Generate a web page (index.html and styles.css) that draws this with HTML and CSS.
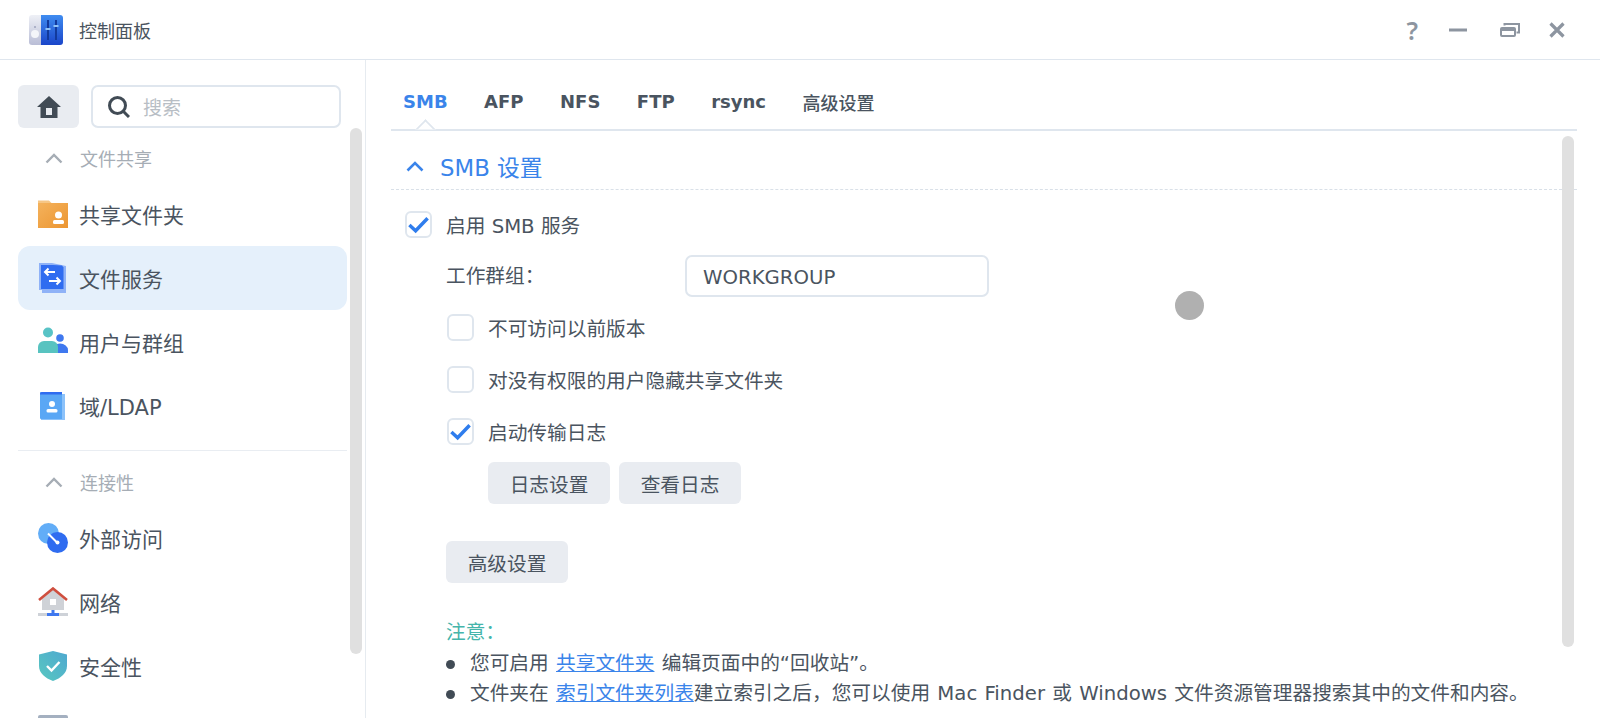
FILE: index.html
```html
<!DOCTYPE html>
<html lang="zh-CN">
  <head>
    <meta charset="UTF-8" />
    <title>控制面板</title>
    <link rel="stylesheet" href="styles.css">
  </head>
  <body>
    <div class="window">
      <header class="titlebar">
        <svg class="app-icon" viewBox="0 0 34 30" width="34" height="30">
          <defs>
            <linearGradient id="appLeft" x1="0" y1="0" x2="0" y2="1">
              <stop offset="0" stop-color="#eef0f6" />
              <stop offset="1" stop-color="#b9bdd6" />
            </linearGradient>
            <linearGradient id="appRight" x1="0" y1="0" x2="0" y2="1">
              <stop offset="0" stop-color="#3f8cf0" />
              <stop offset="1" stop-color="#1a45c9" />
            </linearGradient>
          </defs>
          <path d="M3 0h10v30H3a3 3 0 0 1-3-3V3a3 3 0 0 1 3-3z" fill="url(#appLeft)" />
          <path d="M12 0h19a3 3 0 0 1 3 3v24a3 3 0 0 1-3 3H12z" fill="url(#appRight)" />
          <circle cx="6" cy="19" r="4" fill="#f4f5f9" />
          <circle cx="6" cy="12" r="1" fill="#9ea3bd" />
          <path d="M19 5v20M27 5v20" stroke="#123a9c" stroke-width="2" />
          <path d="M16.5 14h5M24.5 11h5" stroke="#8fc2f7" stroke-width="2" />
        </svg>
        <span class="app-title">控制面板</span>
        <div class="win-controls">
          <span class="win-help">?</span>
          <svg viewBox="0 0 18 18" width="18" height="18"><path d="M0 9h18" stroke="#8d95a0" stroke-width="3" /></svg>
          <svg class="win-restore" viewBox="0 0 20 14" width="20" height="14"><path d="M4.5 2.500V1H19v8.500h-2.500" fill="none" stroke="#8d95a0" stroke-width="2" /><rect x="1" y="5" width="14" height="8" rx="1" fill="none" stroke="#8d95a0" stroke-width="2" /><path d="M1 6.500h14" stroke="#8d95a0" stroke-width="3" /></svg>
          <svg viewBox="0 0 16 16" width="16" height="16"><path d="M1.500 1.500l13 13M14.500 1.500l-13 13" stroke="#8d95a0" stroke-width="3.2" /></svg>
        </div>
      </header>

      <div class="body-row">
        <aside class="sidebar">
          <div class="search-row">
            <button class="home-btn">
              <svg viewBox="0 0 24 22" width="24" height="22"><path d="M12 0L0 11h3.500v11h17V11H24z" fill="#414b55" /><rect x="9" y="12" width="6" height="7" fill="#e9ecf1" /></svg>
            </button>
            <div class="search-box">
              <svg viewBox="0 0 22 22" width="22" height="22"><circle cx="9.500" cy="9.500" r="8" fill="none" stroke="#414b55" stroke-width="3" /><path d="M15 15l6 6" stroke="#414b55" stroke-width="3" /></svg>
              <span class="search-text">搜索</span>
            </div>
          </div>

          <div class="nav-label">
            <svg viewBox="0 0 18 11" width="18" height="11"><path d="M1.500 9.500L9 2l7.500 7.500" fill="none" stroke="#a6adb5" stroke-width="2.4" /></svg>
            <span>文件共享</span>
          </div>
          <div class="nav-item">
            <svg class="nav-icon" viewBox="0 0 30 30" width="30" height="30">
              <defs>
                <linearGradient id="folderFill" x1="0" y1="0" x2="1" y2="1">
                  <stop offset="0" stop-color="#f4b25c" />
                  <stop offset="1" stop-color="#ec9632" />
                </linearGradient>
              </defs>
              <path d="M0 1.500h11l3 3h-14z" fill="#f6c685" />
              <rect x="0" y="4" width="30" height="25" fill="url(#folderFill)" />
              <circle cx="20.500" cy="16" r="3.500" fill="#fff" />
              <rect x="15" y="21" width="11" height="4" rx="1.500" fill="#fff" />
            </svg>
            <span>共享文件夹</span>
          </div>
          <div class="nav-item active">
            <svg class="nav-icon" viewBox="0 0 30 30" width="30" height="30">
              <path d="M1 0h13l14 3v27H4V27H1z" fill="#8fb2f7" />
              <path d="M3 2h12l9 .5 1.500 2V26H3z" fill="#2f6cf0" />
              <path d="M17 9H7M10.500 5.500L7 9l3.500 3.500M11 18h11M18.500 14.500L22 18l-3.500 3.500" fill="none" stroke="#fff" stroke-width="2" />
            </svg>
            <span>文件服务</span>
          </div>
          <div class="nav-item">
            <svg class="nav-icon" viewBox="0 0 30 30" width="30" height="30">
              <circle cx="22" cy="11" r="3.800" fill="#3f78ef" />
              <path d="M14 26v-3a8 6.500 0 0 1 8-6.500 8 6.500 0 0 1 8 6.500v3z" fill="#3f78ef" />
              <circle cx="10" cy="5.500" r="5" fill="#58c3c6" />
              <path d="M0 26v-6a6 6 0 0 1 6-6h8a6 6 0 0 1 6 6v6z" fill="#58c3c0" />
            </svg>
            <span>用户与群组</span>
          </div>
          <div class="nav-item">
            <svg class="nav-icon" viewBox="0 0 30 30" width="30" height="30">
              <path d="M3 3h24v26H3z" fill="#8cc2fa" />
              <path d="M2 2a1 1 0 0 1 1-1h21v27H3a1 1 0 0 1-1-1z" fill="#5aa7f5" />
              <path d="M2 3a2 2 0 0 1 2-2h20v2.500H2z" fill="#2f6cf0" />
              <circle cx="14" cy="13" r="3" fill="#fff" />
              <rect x="8.500" y="18" width="11" height="3.500" rx="1.500" fill="#fff" />
            </svg>
            <span>域/LDAP</span>
          </div>

          <div class="nav-divider"></div>

          <div class="nav-label">
            <svg viewBox="0 0 18 11" width="18" height="11"><path d="M1.500 9.500L9 2l7.500 7.500" fill="none" stroke="#a6adb5" stroke-width="2.4" /></svg>
            <span>连接性</span>
          </div>
          <div class="nav-item">
            <svg class="nav-icon" viewBox="0 0 30 30" width="30" height="30">
              <circle cx="10.500" cy="10.500" r="10.500" fill="#62adf7" />
              <circle cx="19.500" cy="19.500" r="10.500" fill="#2f6cf0" />
              <path d="M10 10.500l9 9" stroke="#fff" stroke-width="2" />
              <circle cx="19.500" cy="19.500" r="2" fill="#fff" />
            </svg>
            <span>外部访问</span>
          </div>
          <div class="nav-item">
            <svg class="nav-icon" viewBox="0 0 30 30" width="30" height="30">
              <path d="M4 12L15 2l11 10v11H4z" fill="#cfd2d7" />
              <path d="M1 13L15 1.500 29 13" fill="none" stroke="#cf4f3f" stroke-width="2.6" />
              <rect x="12" y="12" width="6" height="6" fill="#fff" />
              <rect x="0" y="26" width="30" height="3" fill="#ced2d8" />
              <path d="M15 23v4" stroke="#3f78ef" stroke-width="3" />
              <rect x="9" y="26" width="12" height="3" fill="#3f78ef" />
            </svg>
            <span>网络</span>
          </div>
          <div class="nav-item">
            <svg class="nav-icon" viewBox="0 0 30 30" width="30" height="30">
              <defs>
                <linearGradient id="shieldFill" x1="0" y1="1" x2="1" y2="0">
                  <stop offset="0" stop-color="#58c8c0" />
                  <stop offset="1" stop-color="#4fa8d0" />
                </linearGradient>
              </defs>
              <path d="M15 0l14 3.500V15c0 7-6 12-14 15C7 27 1 22 1 15V3.500z" fill="url(#shieldFill)" />
              <path d="M9 15l4.500 4.500L21.500 11" fill="none" stroke="#fff" stroke-width="2.4" />
            </svg>
            <span>安全性</span>
          </div>
          <div class="nav-item">
            <svg class="nav-icon" viewBox="0 0 30 30" width="30" height="30"><rect x="0" y="0" width="30" height="28" rx="2" fill="#a4b0c0" /></svg>
          </div>
          <div class="sidebar-scroll"></div>
        </aside>

        <main class="content">
          <nav class="tabs">
            <a class="tab selected">SMB</a>
            <a class="tab">AFP</a>
            <a class="tab">NFS</a>
            <a class="tab">FTP</a>
            <a class="tab">rsync</a>
            <a class="tab plain">高级设置</a>
          </nav>

          <div class="section-head">
            <svg viewBox="0 0 18 11" width="18" height="11"><path d="M1.500 9.500L9 2l7.500 7.500" fill="none" stroke="#3a84ea" stroke-width="2.6" /></svg>
            <span>SMB 设置</span>
          </div>

          <div class="form">
            <label class="check-row first">
              <span class="check-box">
                <svg viewBox="0 0 24 20" width="24" height="20"><path d="M2.500 10l6.500 6L21.500 3" fill="none" stroke="#2f7ded" stroke-width="3.6" /></svg>
              </span>
              <span>启用 SMB 服务</span>
            </label>

            <div class="field-row">
              <span class="field-label">工作群组&#65306;</span>
              <div class="text-input">WORKGROUP</div>
            </div>

            <label class="check-row sub near"><span class="check-box"></span><span>不可访问以前版本</span></label>
            <label class="check-row sub"><span class="check-box"></span><span>对没有权限的用户隐藏共享文件夹</span></label>
            <label class="check-row sub">
              <span class="check-box">
                <svg viewBox="0 0 24 20" width="24" height="20"><path d="M2.500 10l6.500 6L21.500 3" fill="none" stroke="#2f7ded" stroke-width="3.6" /></svg>
              </span>
              <span>启动传输日志</span>
            </label>

            <div class="btn-row">
              <button class="btn">日志设置</button>
              <button class="btn">查看日志</button>
            </div>

            <button class="btn advanced">高级设置</button>

            <p class="note-title">注意&#65306;</p>
            <ul class="note-list">
              <li>您可启用 <a class="link">共享文件夹</a> 编辑页面中的“回收站”。</li>
              <li>文件夹在 <a class="link">索引文件夹列表</a>建立索引之后&#65292;您可以使用 Mac Finder 或 Windows 文件资源管理器搜索其中的文件和内容。</li>
            </ul>
          </div>
          <div class="content-scroll"></div>
        </main>
      </div>
      <div class="touch-dot"></div>
    </div>
  </body>
</html>
```

FILE: styles.css
```css
html, body {
  margin: 0;
  height: 100%;
  overflow: hidden;
  background: #fff;
}
body {
  color: #4a5460;
  font-family: "DejaVu Sans", "Noto Sans CJK SC", sans-serif;
  font-size: 19.7px;
}
.window {
  position: relative;
  display: flex;
  flex-direction: column;
  height: 718px;
  overflow: hidden;
}

/* Title bar */
.titlebar {
  flex: none;
  display: flex;
  align-items: center;
  height: 59px;
  padding: 0 35px 0 29px;
  border-bottom: 1px solid #dfe6ee;
  box-sizing: content-box;
}
.app-title {
  margin-left: 16px;
  font-size: 18px;
}
.win-controls {
  margin-left: auto;
  display: flex;
  align-items: center;
  gap: 31px;
}
.win-help {
  color: #8d95a0;
  font-family: "Noto Sans", sans-serif;
  font-size: 25px;
  font-weight: 600;
  line-height: 30px;
}
.win-restore {
  margin: 0 -2px 0 2px;
}

.body-row {
  flex: 1;
  display: flex;
  min-height: 0;
}

/* Sidebar */
.sidebar {
  position: relative;
  flex: none;
  width: 366px;
  padding: 25px 0 0 18px;
  box-sizing: border-box;
  border-right: 1px solid #e6ebf0;
  overflow: hidden;
}
.search-row {
  display: flex;
  gap: 12px;
  width: 323px;
}
.home-btn {
  flex: none;
  display: flex;
  align-items: center;
  justify-content: center;
  width: 61px;
  height: 43px;
  padding: 0;
  border: 0;
  border-radius: 6px;
  background: #e9ecf1;
}
.search-box {
  flex: 1;
  display: flex;
  align-items: center;
  gap: 13px;
  height: 43px;
  padding-left: 15px;
  box-sizing: border-box;
  border: 2px solid #dfe6ee;
  border-radius: 7px;
}
.search-text {
  color: #b8bec5;
  font-size: 19px;
}
.nav-label {
  display: flex;
  align-items: center;
  gap: 17px;
  height: 40px;
  margin: 10px 0 4px;
  padding-left: 27px;
  color: #a6adb5;
  font-size: 18px;
}
.nav-item {
  display: flex;
  align-items: center;
  gap: 11px;
  width: 329px;
  height: 64px;
  padding-left: 20px;
  box-sizing: border-box;
  border-radius: 12px;
  font-size: 21px;
}
.nav-item.active {
  background: #e5f0fb;
}
.nav-icon {
  flex: none;
}
.nav-divider {
  width: 329px;
  height: 1px;
  margin: 12px 0 11px;
  background: #e9edf2;
}
.sidebar-scroll {
  position: absolute;
  left: 350px;
  top: 68px;
  width: 12px;
  height: 526px;
  border-radius: 6px;
  background: #e0e0e0;
}

/* Main panel */
.content {
  position: relative;
  flex: 1;
  min-width: 0;
  padding: 0 23px 0 25px;
}
.tabs {
  position: relative;
  display: flex;
  align-items: center;
  gap: 36.5px;
  height: 55px;
  padding: 14px 0 0 12px;
  border-bottom: 2px solid #dfe6ee;
  font-size: 18px;
  font-weight: 700;
}
.tab.selected {
  color: #3a84ea;
}
.tab.plain {
  font-weight: 500;
}
.tabs::after {
  content: "";
  position: absolute;
  left: 27px;
  bottom: -8px;
  width: 13px;
  height: 13px;
  background: #fff;
  border-top: 2px solid #dfe6ee;
  border-left: 2px solid #dfe6ee;
  transform: rotate(45deg);
  clip-path: polygon(0 0, 100% 0, 0 100%);
}
.section-head {
  display: flex;
  align-items: center;
  gap: 16px;
  height: 46px;
  padding: 12px 0 0 15px;
  box-sizing: content-box;
  border-bottom: 1px dashed #d9e0e8;
  color: #3a84ea;
  font-size: 22.8px;
}
.form {
  padding-left: 14px;
}
.check-row {
  display: flex;
  align-items: center;
  gap: 14px;
  height: 27px;
  margin-top: 25px;
}
.check-row.first {
  margin-top: 21px;
}
.check-row.sub {
  margin-left: 42px;
}
.check-row.near {
  margin-top: 17px;
}
.check-box {
  flex: none;
  display: flex;
  align-items: center;
  justify-content: center;
  width: 27px;
  height: 27px;
  box-sizing: border-box;
  border: 2px solid #dfe6ee;
  border-radius: 6px;
}
.field-row {
  display: flex;
  align-items: center;
  margin: 17px 0 0 41px;
}
.field-label {
  width: 239px;
  padding-bottom: 4px;
}
.text-input {
  width: 304px;
  height: 42px;
  padding-left: 16px;
  box-sizing: border-box;
  border: 2px solid #dfe6ee;
  border-radius: 7px;
  line-height: 41px;
}
.btn-row {
  display: flex;
  gap: 9px;
  margin: 17px 0 0 83px;
}
.btn {
  display: block;
  width: 122px;
  height: 42px;
  padding: 0;
  border: 0;
  border-radius: 6px;
  background: #e9ecf1;
  color: #4a5460;
  font: inherit;
}
.advanced {
  margin: 37px 0 0 41px;
}
.note-title {
  margin: 35px 0 0 41px;
  color: #45b5ab;
  line-height: 30px;
}
.note-list {
  margin: 1px 0 0 41px;
  padding: 0;
  list-style: none;
  line-height: 30px;
  white-space: nowrap;
  word-spacing: 1px;
}
.note-list li {
  position: relative;
  padding-left: 24px;
}
.note-list li::before {
  content: "";
  position: absolute;
  left: 0;
  top: 11px;
  width: 9px;
  height: 9px;
  border-radius: 50%;
  background: #414b55;
}
.link {
  color: #3a84ea;
  text-decoration: underline;
}
.content-scroll {
  position: absolute;
  left: 1196px;
  top: 76px;
  width: 12px;
  height: 511px;
  border-radius: 6px;
  background: #e0e0e0;
}

/* Grey touch marker from the screen recording */
.touch-dot {
  position: absolute;
  left: 1175px;
  top: 291px;
  width: 29px;
  height: 29px;
  border-radius: 50%;
  background: #b0b0b0;
}
```
